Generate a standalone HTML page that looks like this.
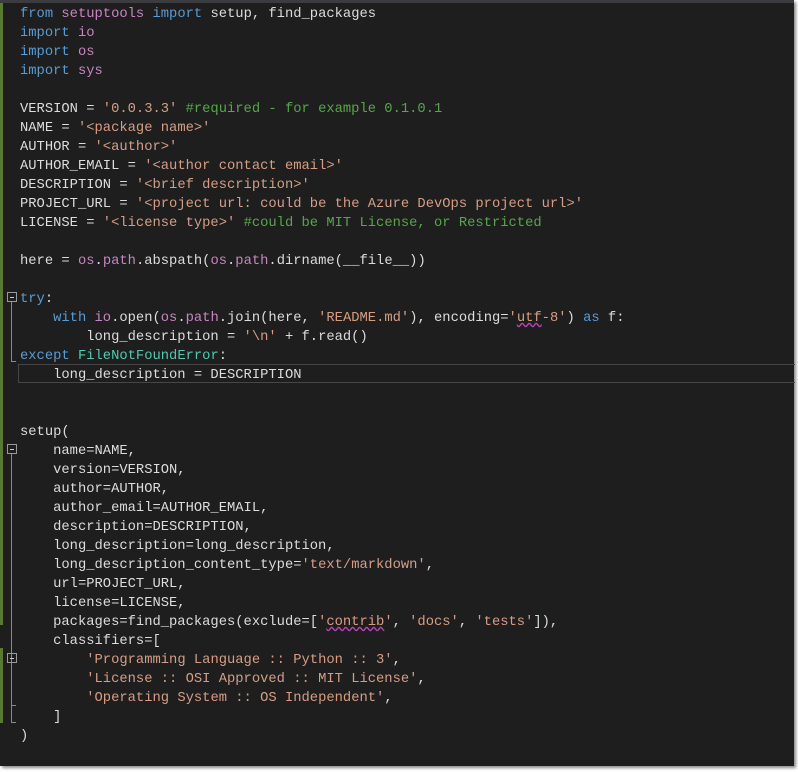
<!DOCTYPE html>
<html><head><meta charset="utf-8"><style>
html,body{margin:0;padding:0;background:#fff;width:798px;height:772px;overflow:hidden}
#ed{position:absolute;left:0;top:0;width:794px;height:766px;background:#1e1e1e;box-shadow:2px 2px 3px #888}
#topbar{position:absolute;left:0;top:0;width:794px;height:3px;background:#3c3c40}
.g{position:absolute;left:0;width:3px;background:#5a7a32}
#code{position:absolute;left:20px;top:5px;font-family:"Liberation Mono",monospace;font-size:13.8px;line-height:19px;white-space:pre;color:#dcdcdc}
.k{color:#569cd6}.m{color:#c586c0}.s{color:#d69d85}.c{color:#57a64a}.t{color:#4ec9b0}
.sq{text-decoration:underline wavy #c040c0;text-decoration-skip-ink:none}
#cur{position:absolute;left:18px;top:364px;width:776px;height:17px;border:1px solid #464646;border-right:none}
.fb{position:absolute;left:7px;width:8px;height:8px;border:1px solid #9a9a9a}
.fb:after{content:"";position:absolute;left:2px;top:3.5px;width:4px;height:1px;background:#ccc}
.vl{position:absolute;left:11px;width:1px;background:#8a8a8a}
.hk{position:absolute;left:11px;width:5px;height:1px;background:#8a8a8a}
</style></head><body>
<div id="ed">
<div id="topbar"></div>
<div class="g" style="top:3px;height:622px"></div>
<div class="g" style="top:648px;height:75px"></div>
<div id="cur"></div>
<div class="fb" style="top:292px"></div>
<div class="vl" style="top:302px;height:60px"></div><div class="hk" style="top:361px"></div>
<div class="fb" style="top:444px"></div>
<div class="vl" style="top:454px;height:268px"></div><div class="hk" style="top:722px"></div>
<div class="fb" style="top:653px"></div>
<div class="hk" style="top:705px"></div>
<div id="code"><span class="k">from</span> <span class="m">setuptools</span> <span class="k">import</span> setup, find_packages
<span class="k">import</span> <span class="m">io</span>
<span class="k">import</span> <span class="m">os</span>
<span class="k">import</span> <span class="m">sys</span>

VERSION = <span class="s">'0.0.3.3'</span> <span class="c">#required - for example 0.1.0.1</span>
NAME = <span class="s">'&lt;package name&gt;'</span>
AUTHOR = <span class="s">'&lt;author&gt;'</span>
AUTHOR_EMAIL = <span class="s">'&lt;author contact email&gt;'</span>
DESCRIPTION = <span class="s">'&lt;brief description&gt;'</span>
PROJECT_URL = <span class="s">'&lt;project url: could be the Azure DevOps project url&gt;'</span>
LICENSE = <span class="s">'&lt;license type&gt;'</span> <span class="c">#could be MIT License, or Restricted</span>

here = <span class="m">os</span>.<span class="m">path</span>.abspath(<span class="m">os</span>.<span class="m">path</span>.dirname(__file__))

<span class="k">try</span>:
    <span class="k">with</span> <span class="m">io</span>.open(<span class="m">os</span>.<span class="m">path</span>.join(here, <span class="s">'README.md'</span>), encoding=<span class="s">'<span class="sq">utf</span>-8'</span>) <span class="k">as</span> f:
        long_description = <span class="s">'\n'</span> + f.read()
<span class="k">except</span> <span class="t">FileNotFoundError</span>:
    long_description = DESCRIPTION


setup(
    name=NAME,
    version=VERSION,
    author=AUTHOR,
    author_email=AUTHOR_EMAIL,
    description=DESCRIPTION,
    long_description=long_description,
    long_description_content_type=<span class="s">'text/markdown'</span>,
    url=PROJECT_URL,
    license=LICENSE,
    packages=find_packages(exclude=[<span class="s">'<span class="sq">contrib</span>'</span>, <span class="s">'docs'</span>, <span class="s">'tests'</span>]),
    classifiers=[
        <span class="s">'Programming Language :: Python :: 3'</span>,
        <span class="s">'License :: OSI Approved :: MIT License'</span>,
        <span class="s">'Operating System :: OS Independent'</span>,
    ]
)</div>
</div>
</body></html>
